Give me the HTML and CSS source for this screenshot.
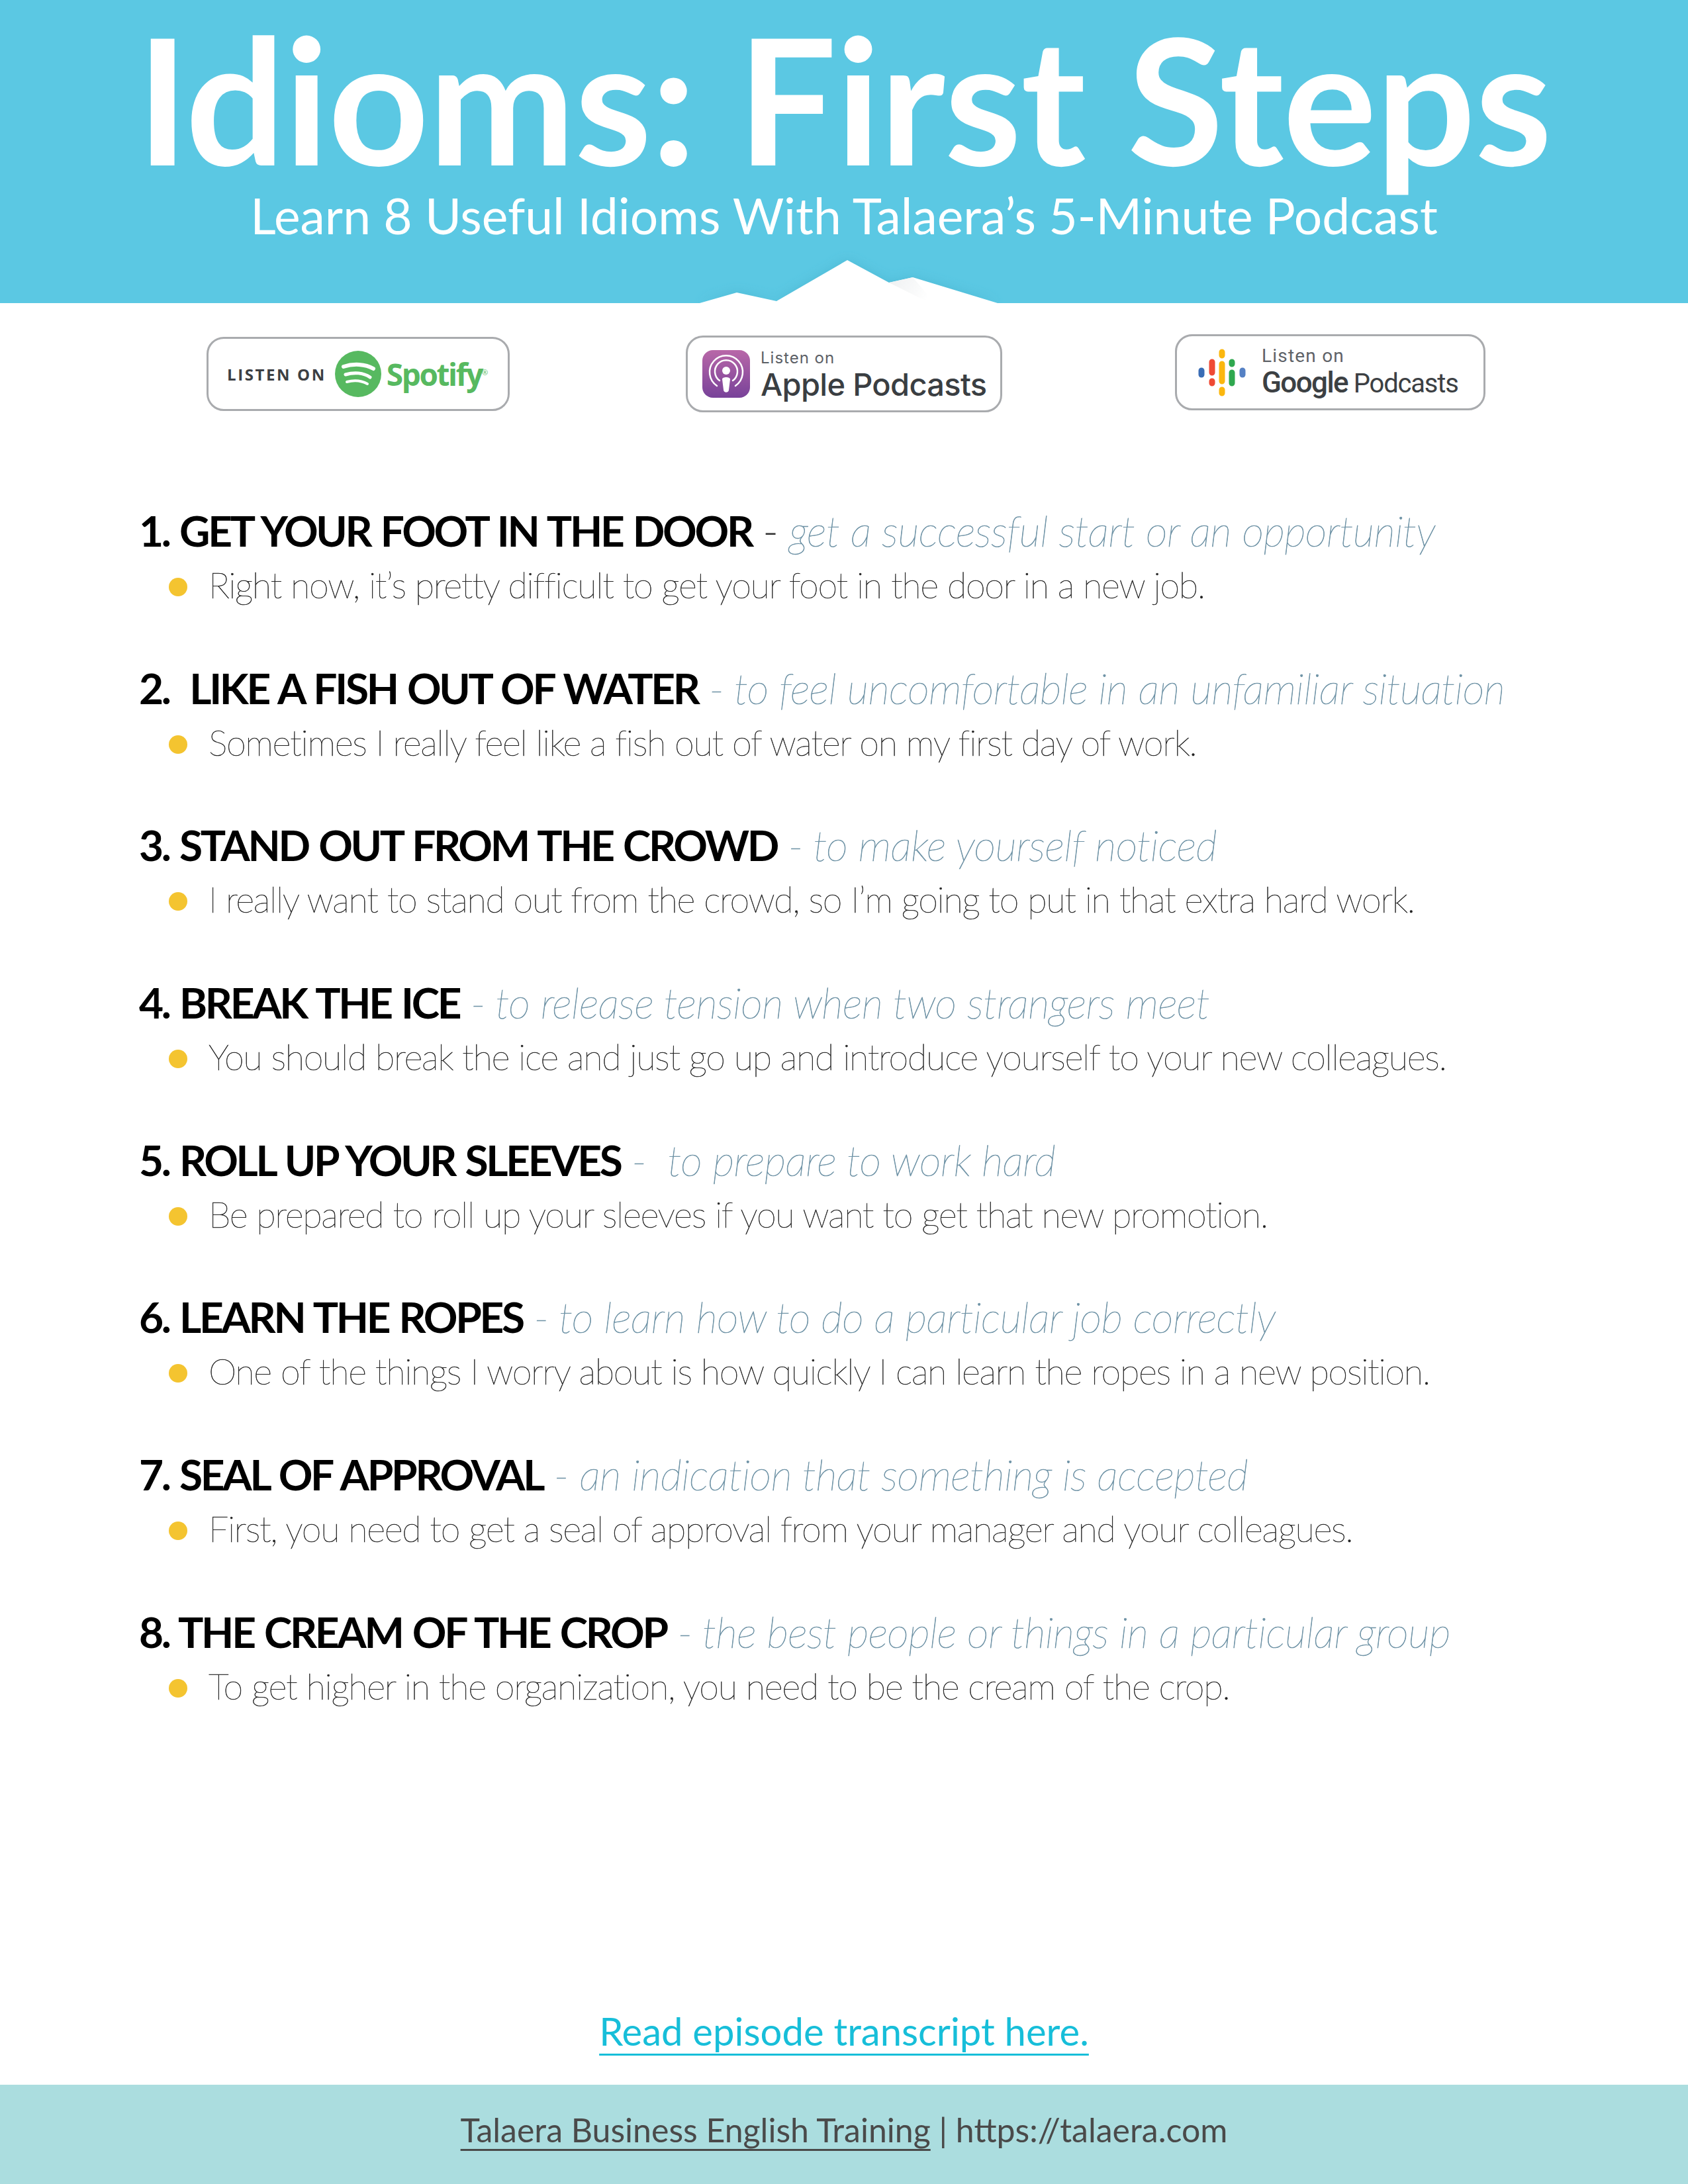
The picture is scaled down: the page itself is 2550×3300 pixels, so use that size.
FILE: index.html
```html
<!DOCTYPE html>
<html lang="en">
<head>
<meta charset="utf-8">
<title>Idioms: First Steps</title>
<link rel="stylesheet" href="styles.css">
</head>
<body>
<div class="page">
  <header class="hero">
    <h1 class="title">Idioms: First Steps</h1>
    <p class="subtitle">Learn 8 Useful Idioms With Talaera’s 5-Minute Podcast</p>
    <svg class="peak" viewBox="1030 370 490 88" width="490" height="88" aria-hidden="true">
      <defs>
        <filter id="peakBlur" x="-20%" y="-50%" width="140%" height="200%"><feGaussianBlur stdDeviation="9"/></filter>
        <linearGradient id="peakShade" x1="0" y1="0" x2="1" y2="0.35">
          <stop offset="0" stop-color="#eef0f1"/>
          <stop offset="1" stop-color="#ffffff"/>
        </linearGradient>
      </defs>
      <polygon class="peak-shadow" filter="url(#peakBlur)" points="1057,458 1113,442 1173,455 1280,393 1343,427 1379,419 1507,458"/>
      <polygon fill="#fff" points="1057,458 1113,442 1173,455 1280,393 1343,427 1379,419 1507,458"/>
      <polygon fill="url(#peakShade)" points="1343,427 1379,419 1412,458 1405,458"/>
    </svg>
  </header>

  <nav class="badges">
    <a class="badge badge-spotify">
      <span class="listen-caps">LISTEN ON</span>
      <svg class="spot-icon" viewBox="0 0 70 70" width="70" height="70" aria-hidden="true">
        <circle cx="35" cy="35" r="35" fill="#57b960"/>
        <path d="M13 24 C28 19 46 20 58 27" fill="none" stroke="#fff" stroke-width="6" stroke-linecap="round"/>
        <path d="M16 36 C29 32 43 33 53 40" fill="none" stroke="#fff" stroke-width="5" stroke-linecap="round"/>
        <path d="M18 47 C29 44 40 45 49 50" fill="none" stroke="#fff" stroke-width="4" stroke-linecap="round"/>
      </svg>
      <span class="spot-word">Spotify<sup class="reg">®</sup></span>
    </a>
    <a class="badge badge-apple">
      <svg class="apple-icon" viewBox="0 0 72 72" width="72" height="72" aria-hidden="true">
        <defs>
          <linearGradient id="applePurple" x1="0" y1="0" x2="0" y2="1">
            <stop offset="0" stop-color="#b867a8"/>
            <stop offset="1" stop-color="#784299"/>
          </linearGradient>
        </defs>
        <rect width="72" height="72" rx="16" fill="url(#applePurple)"/>
        <path d="M22 54 A25 25 0 1 1 50 54" fill="none" stroke="#fff" stroke-width="2.5" stroke-linecap="round"/>
        <path d="M26 46 A17 17 0 1 1 46 46" fill="none" stroke="#fff" stroke-width="2.5" stroke-linecap="round"/>
        <circle cx="36" cy="31" r="6" fill="#fff"/>
        <path d="M30 44 C30 40 42 40 42 44 L40 60 C40 65 32 65 32 60 Z" fill="#fff"/>
      </svg>
      <span class="badge-stack">
        <span class="listen-apple">Listen on</span>
        <span class="word-apple">Apple Podcasts</span>
      </span>
    </a>
    <a class="badge badge-google">
      <svg class="google-icon" viewBox="0 0 72 72" width="72" height="72" aria-hidden="true">
        <g fill="none" stroke-width="9" stroke-linecap="round">
          <path d="M5 33 V39" stroke="#3a6db5"/>
          <path d="M67 33 V39" stroke="#5581c4"/>
          <path d="M21 20 V36 M21 49 V52" stroke="#ef4a35"/>
          <path d="M36 5 V10 M36 23 V49 M36 62 V67" stroke="#fbb70f"/>
          <path d="M51 20 V23 M51 36 V52" stroke="#2fa84f"/>
        </g>
      </svg>
      <span class="badge-stack">
        <span class="listen-google">Listen on</span>
        <span class="word-google"><b class="google-name">Google</b> Podcasts</span>
      </span>
    </a>
  </nav>

  <main class="idioms">
    <section class="idiom">
      <h2 class="line"><b class="phrase">1. GET YOUR FOOT IN THE DOOR</b> <span class="dash-dark">-</span> <i class="meaning">get a successful start or an opportunity</i></h2>
      <p class="example">Right now, it’s pretty difficult to get your foot in the door in a new job.</p>
    </section>
    <section class="idiom">
      <h2 class="line"><b class="phrase">2.&nbsp; LIKE A FISH OUT OF WATER</b> <i class="meaning">- to feel uncomfortable in an unfamiliar situation</i></h2>
      <p class="example">Sometimes I really feel like a fish out of water on my first day of work.</p>
    </section>
    <section class="idiom">
      <h2 class="line"><b class="phrase">3. STAND OUT FROM THE CROWD</b> <i class="meaning">- to make yourself noticed</i></h2>
      <p class="example">I really want to stand out from the crowd, so I’m going to put in that extra hard work.</p>
    </section>
    <section class="idiom">
      <h2 class="line"><b class="phrase">4. BREAK THE ICE</b> <i class="meaning">- to release tension when two strangers meet</i></h2>
      <p class="example">You should break the ice and just go up and introduce yourself to your new colleagues.</p>
    </section>
    <section class="idiom">
      <h2 class="line"><b class="phrase">5. ROLL UP YOUR SLEEVES</b> <i class="meaning">-&nbsp; to prepare to work hard</i></h2>
      <p class="example">Be prepared to roll up your sleeves if you want to get that new promotion.</p>
    </section>
    <section class="idiom">
      <h2 class="line"><b class="phrase">6. LEARN THE ROPES</b> <i class="meaning">- to learn how to do a particular job correctly</i></h2>
      <p class="example">One of the things I worry about is how quickly I can learn the ropes in a new position.</p>
    </section>
    <section class="idiom">
      <h2 class="line"><b class="phrase">7. SEAL OF APPROVAL</b> <i class="meaning">- an indication that something is accepted</i></h2>
      <p class="example">First, you need to get a seal of approval from your manager and your colleagues.</p>
    </section>
    <section class="idiom">
      <h2 class="line"><b class="phrase">8. THE CREAM OF THE CROP</b> <i class="meaning">- the best people or things in a particular group</i></h2>
      <p class="example">To get higher in the organization, you need to be the cream of the crop.</p>
    </section>
  </main>

  <p class="transcript"><a class="transcript-link">Read episode transcript here.</a></p>
  <footer class="foot"><span class="foot-text"><a class="foot-link">Talaera Business English Training</a> | https://talaera.com</span></footer>
</div>
</body>
</html>
```
FILE: styles.css
```css
* { box-sizing: border-box; }
html, body { margin: 0; padding: 0; background: #fff; }
.page {
  width: 2550px;
  height: 3300px;
  display: flex;
  flex-direction: column;
  overflow: hidden;
  font-family: Lato, "Liberation Sans", sans-serif;
}
.hero {
  position: relative;
  height: 458px;
  background: #5bc8e3;
  color: #fff;
  text-align: center;
  padding-top: 15px;
}
.title {
  margin: 0;
  font-size: 265px;
  line-height: 265px;
  font-weight: 700;
  letter-spacing: -1px;
}
.subtitle {
  margin: 0;
  font-size: 75px;
  line-height: 90px;
  font-weight: 400;
}
.peak { position: absolute; left: 1030px; bottom: 0; display: block; }
.peak-shadow { fill: #3fa9c4; opacity: .45; }

.badges {
  height: 190px;
  position: relative;
}
.badge {
  position: absolute;
  display: flex;
  align-items: center;
  background: #fff;
  border: 3px solid #a9abae;
  border-radius: 26px;
}
.badge-spotify { left: 312px; top: 51px; width: 458px; height: 112px; padding-left: 28px; }
.badge-apple { left: 1036px; top: 49px; width: 478px; height: 116px; padding-left: 22px; }
.badge-google { left: 1775px; top: 47px; width: 469px; height: 115px; padding-left: 32px; }
.listen-caps {
  font: 700 24px "Open Sans", sans-serif;
  letter-spacing: 2.6px;
  color: #3c3f43;
  margin-right: 13px;
  white-space: nowrap;
}
.spot-word {
  font: 700 46px "Open Sans", sans-serif;
  letter-spacing: -2.4px;
  color: #57b960;
  margin-left: 8px;
  white-space: nowrap;
}
.reg { font-size: 11px; font-weight: 400; letter-spacing: 0; vertical-align: 16px; line-height: 0; }
.apple-icon { margin-right: 16px; }
.google-icon { margin-right: 24px; }
.badge-stack { display: flex; flex-direction: column; white-space: nowrap; }
.listen-apple { font: 400 24px/28px Inter, sans-serif; letter-spacing: 1px; color: #5c6066; padding-top: 3px; }
.word-apple { font: 500 47px/52px Inter, sans-serif; letter-spacing: -.7px; color: #3a3e42; }
.listen-google { font: 400 28px/32px Roboto, sans-serif; letter-spacing: 1.2px; color: #5f6368; }
.word-google { font: 400 40px/48px Roboto, sans-serif; letter-spacing: -1.2px; color: #3c4043; }
.google-name { font-weight: 500; font-size: 44px; letter-spacing: -1.6px; }

.idioms { padding: 109px 0 0 210px; display: flex; flex-direction: column; gap: 70.7px; }
.idiom { display: flex; flex-direction: column; }
.line {
  margin: 0;
  height: 87px;
  font-size: 64px;
  line-height: 90px;
  font-weight: 400;
  white-space: nowrap;
}
.phrase { font-weight: 700; color: #000; letter-spacing: -3.3px; word-spacing: 3px; }
.dash-dark { color: #333; font-weight: 300; }
.meaning {
  font-weight: 100;
  font-style: italic;
  color: #6f93a6;
  letter-spacing: -.63px;
  -webkit-text-stroke: .7px #6f93a6;
}
.example {
  margin: 0;
  height: 80px;
  padding-left: 105px;
  position: relative;
  font-size: 54px;
  line-height: 80px;
  font-weight: 100;
  color: #222;
  letter-spacing: -1.33px;
  -webkit-text-stroke: .55px #222;
  white-space: nowrap;
}
.example::before {
  content: "";
  position: absolute;
  left: 45px;
  top: 29px;
  width: 28px;
  height: 28px;
  border-radius: 50%;
  background: #f4c430;
}

.transcript {
  margin: auto 0 40px;
  height: 86px;
  text-align: center;
  font-size: 58px;
  line-height: 90px;
}
.transcript-link { color: #17bed9; text-decoration: underline; text-decoration-thickness: 3px; text-underline-offset: 12px; }
.foot {
  height: 150px;
  padding-bottom: 14px;
  background: #abdddf;
  display: flex;
  align-items: center;
  justify-content: center;
  color: #4a4a4a;
  font-size: 50px;
}
.foot-link { text-decoration: underline; text-decoration-thickness: 3px; text-underline-offset: 10px; }
```
